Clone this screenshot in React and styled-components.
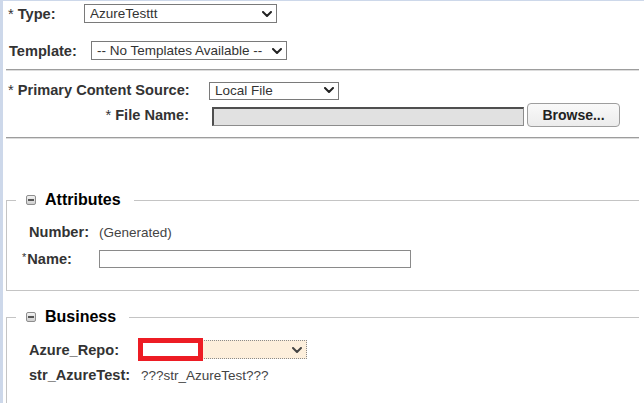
import React from 'react'
import styled, { createGlobalStyle } from 'styled-components'

const GlobalStyle = createGlobalStyle`
  html, body {
    margin: 0;
    padding: 0;
    background: #fff;
  }
  body {
    font-family: 'Liberation Sans', Arial, sans-serif;
    color: #333;
  }
`

const Frame = styled.div`
  border-top: 1px solid #cdd8ea;
  border-left: 3px solid #cdd8ea;
  min-height: 420px;
  overflow: hidden;
`

const TopForm = styled.div`
  padding: 0 5px 0 5px;
`

const Row = styled.div`
  display: flex;
  align-items: ${p => p.align || 'center'};
  height: ${p => p.h}px;
  margin-top: ${p => p.top}px;
`

const Label = styled.div`
  box-sizing: border-box;
  flex: none;
  width: ${p => p.w}px;
  padding-left: ${p => p.pl || 0}px;
  padding-right: ${p => p.pr || 0}px;
  text-align: ${p => (p.right ? 'right' : 'left')};
  align-self: center;
  font-size: 14.6px;
  font-weight: bold;
  color: #333;
  white-space: nowrap;
`

const Star = styled.span`
  font-weight: normal;
`

const SelectWrap = styled.div`
  position: relative;
  flex: none;
  width: ${p => p.w}px;
  height: ${p => p.h || 19}px;
`

const Select = styled.select`
  appearance: none;
  box-sizing: border-box;
  width: 100%;
  height: 100%;
  margin: 0;
  padding: 0 18px 0 5px;
  border: 1px solid ${p => (p.dotted ? '#8a8a8a' : '#7a7a7a')};
  border-style: ${p => (p.dotted ? 'dotted' : 'solid')};
  border-radius: 0;
  background: ${p => (p.dotted ? '#fdefdc' : '#fff')};
  font-family: 'Liberation Sans', Arial, sans-serif;
  font-size: 13.5px;
  color: #333;
  outline: none;
`

const Chevron = styled.svg`
  position: absolute;
  right: 5px;
  top: 50%;
  margin-top: -3px;
  pointer-events: none;
`

const Redaction = styled.div`
  position: absolute;
  left: 0;
  top: -2px;
  width: 65px;
  height: 23px;
  box-sizing: border-box;
  border: 5px solid #ed1c24;
  background: #fff;
`

const FileInput = styled.div`
  box-sizing: border-box;
  flex: none;
  width: 312px;
  height: 19px;
  margin-bottom: 1px;
  background: #e1e1e1;
  border: 1px solid #8c8c8c;
  border-top: 2px solid #4f4f4f;
  border-left: 2px solid #4f4f4f;
`

const BrowseButton = styled.button`
  flex: none;
  width: 93px;
  height: 24px;
  margin-left: 3px;
  padding: 0;
  border: 1px solid #9e9e9e;
  border-radius: 4px;
  background: linear-gradient(#f9f9f9, #ececec);
  font-family: 'Liberation Sans', Arial, sans-serif;
  font-size: 14px;
  font-weight: bold;
  color: #222;
`

const Rule = styled.div`
  margin: ${p => p.top}px 0 0 -2px;
  height: 0;
  border-top: 1px solid #9d9d9d;
  border-bottom: 1px solid #dcdcdc;
`

const Fieldset = styled.fieldset`
  margin: ${p => p.top}px 5px 0 3px;
  padding: 0;
  border: 1px solid #c4c4c4;
  border-right: none;
  border-bottom: ${p => (p.open ? 'none' : '1px solid #c4c4c4')};
  min-width: 0;
`

const FieldBody = styled.div`
  padding: 0 0 ${p => p.bottom}px 22px;
`

const Legend = styled.legend`
  display: flex;
  align-items: center;
  gap: 9px;
  margin-left: 9px;
  padding: 0 13px 0 10px;
  height: 20px;
  font-size: 16px;
  font-weight: bold;
  color: #000;
`

const Toggle = styled.span`
  position: relative;
  box-sizing: border-box;
  width: 10px;
  height: 10px;
  border: 1px solid #8e8e8e;
  border-radius: 2px;
  background: linear-gradient(#f2f2f2, #cfcfcf);
  &::after {
    content: '';
    position: absolute;
    left: 1px;
    right: 1px;
    top: 3px;
    height: 2px;
    background: #555;
  }
`

const FieldRow = styled.div`
  display: flex;
  align-items: center;
  height: ${p => p.h}px;
  margin-top: ${p => p.top}px;
`

const FieldLabel = styled.div`
  flex: none;
  width: ${p => p.w}px;
  font-size: 14.6px;
  font-weight: bold;
  color: #333;
  white-space: nowrap;
`

const Req = styled.sup`
  margin-left: -7px;
  margin-right: 1px;
  font-size: 11px;
  font-weight: normal;
  vertical-align: 3px;
  line-height: 0;
`

const Value = styled.div`
  padding-left: ${p => p.pl || 0}px;
  font-size: 13.5px;
  color: #444;
`

const TextInput = styled.input`
  box-sizing: border-box;
  width: 312px;
  height: 18px;
  margin: 0;
  border: 1px solid #8a8a8a;
  background: #fff;
  outline: none;
`

const ChevronIcon = ({ color = '#222' }) => (
  <Chevron width="10" height="6" viewBox="0 0 10 6">
    <path d="M1 1 L5 5 L9 1" fill="none" stroke={color} strokeWidth="2" strokeLinecap="round" strokeLinejoin="round" />
  </Chevron>
)

function Dropdown({ w, h, value, dotted, children }) {
  return (
    <SelectWrap w={w} h={h}>
      <Select dotted={dotted} defaultValue={value}>
        <option value={value}>{value}</option>
      </Select>
      <ChevronIcon color={dotted ? '#444' : '#222'} />
      {children}
    </SelectWrap>
  )
}

export default function App() {
  return (
    <>
      <GlobalStyle />
      <Frame>
        <TopForm>
          <Row h={19} top={3}>
            <Label w={76}>
              <Star>* </Star>Type:
            </Label>
            <Dropdown w={193} value="AzureTesttt" />
          </Row>
          <Row h={19} top={18}>
            <Label w={83} pl={1}>
              Template:
            </Label>
            <Dropdown w={196} value="-- No Templates Available --" />
          </Row>
          <Rule top={9} />
          <Row h={18} top={10}>
            <Label w={201}>
              <Star>* </Star>Primary Content Source:
            </Label>
            <Dropdown w={130} h={18} value="Local File" />
          </Row>
          <Row h={24} top={4} align="flex-end">
            <Label w={204} pr={23} right>
              <Star>* </Star>File Name:
            </Label>
            <FileInput />
            <BrowseButton>Browse...</BrowseButton>
          </Row>
          <Rule top={10} />
        </TopForm>

        <Fieldset top={51}>
          <Legend>
            <Toggle />
            Attributes
          </Legend>
          <FieldBody bottom={22}>
            <FieldRow h={20} top={12}>
              <FieldLabel w={70}>Number:</FieldLabel>
              <Value>(Generated)</Value>
            </FieldRow>
            <FieldRow h={18} top={8}>
              <FieldLabel w={70}>
                <Req>*</Req>Name:
              </FieldLabel>
              <TextInput type="text" />
            </FieldRow>
          </FieldBody>
        </Fieldset>

        <Fieldset top={16} open>
          <Legend>
            <Toggle />
            Business
          </Legend>
          <FieldBody bottom={40}>
            <FieldRow h={19} top={13}>
              <FieldLabel w={109}>Azure_Repo:</FieldLabel>
              <Dropdown w={169} value="" dotted>
                <Redaction />
              </Dropdown>
            </FieldRow>
            <FieldRow h={20} top={6}>
              <FieldLabel w={109}>str_AzureTest:</FieldLabel>
              <Value pl={3}>???str_AzureTest???</Value>
            </FieldRow>
          </FieldBody>
        </Fieldset>
      </Frame>
    </>
  )
}
